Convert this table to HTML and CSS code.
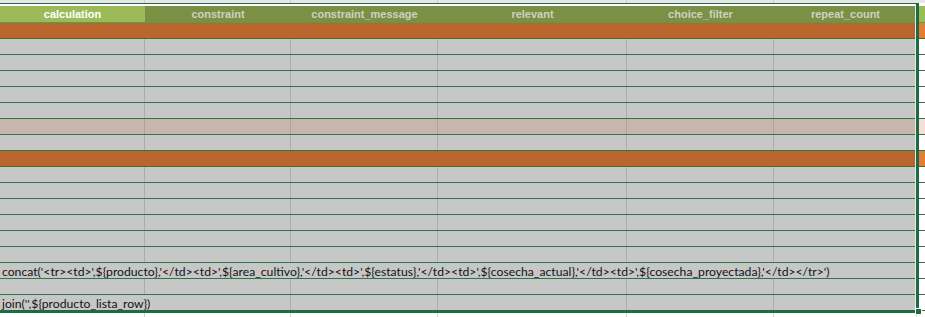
FILE: index.html
```html
<!DOCTYPE html>
<html lang="es">
<head>
<meta charset="utf-8">
<title>Hoja</title>
<link rel="stylesheet" href="styles.css">
</head>
<body>
<div class="sheet">
  <div class="row strip"><div class="c"></div><div class="c"></div><div class="c"></div><div class="c"></div><div class="c"></div><div class="c"></div><div class="edge"></div><div class="out"></div></div>

  <div class="row hdr">
    <div class="c active">calculation</div>
    <div class="c">constraint</div>
    <div class="c">constraint_message</div>
    <div class="c">relevant</div>
    <div class="c">choice_filter</div>
    <div class="c">repeat_count</div>
    <div class="edge"></div><div class="out"></div>
  </div>

  <div class="row orange"><div class="c"></div><div class="c"></div><div class="c"></div><div class="c"></div><div class="c"></div><div class="c"></div><div class="edge"></div><div class="out"></div></div>
  <div class="row gray"><div class="c"></div><div class="c"></div><div class="c"></div><div class="c"></div><div class="c"></div><div class="c"></div><div class="edge"></div><div class="out"></div></div>
  <div class="row gray"><div class="c"></div><div class="c"></div><div class="c"></div><div class="c"></div><div class="c"></div><div class="c"></div><div class="edge"></div><div class="out"></div></div>
  <div class="row gray"><div class="c"></div><div class="c"></div><div class="c"></div><div class="c"></div><div class="c"></div><div class="c"></div><div class="edge"></div><div class="out"></div></div>
  <div class="row gray"><div class="c"></div><div class="c"></div><div class="c"></div><div class="c"></div><div class="c"></div><div class="c"></div><div class="edge"></div><div class="out"></div></div>
  <div class="row gray"><div class="c"></div><div class="c"></div><div class="c"></div><div class="c"></div><div class="c"></div><div class="c"></div><div class="edge"></div><div class="out"></div></div>
  <div class="row pink"><div class="c"></div><div class="c"></div><div class="c"></div><div class="c"></div><div class="c"></div><div class="c"></div><div class="edge"></div><div class="out"></div></div>
  <div class="row gray"><div class="c"></div><div class="c"></div><div class="c"></div><div class="c"></div><div class="c"></div><div class="c"></div><div class="edge"></div><div class="out"></div></div>
  <div class="row orange"><div class="c"></div><div class="c"></div><div class="c"></div><div class="c"></div><div class="c"></div><div class="c"></div><div class="edge"></div><div class="out"></div></div>
  <div class="row gray"><div class="c"></div><div class="c"></div><div class="c"></div><div class="c"></div><div class="c"></div><div class="c"></div><div class="edge"></div><div class="out"></div></div>
  <div class="row gray"><div class="c"></div><div class="c"></div><div class="c"></div><div class="c"></div><div class="c"></div><div class="c"></div><div class="edge"></div><div class="out"></div></div>
  <div class="row gray"><div class="c"></div><div class="c"></div><div class="c"></div><div class="c"></div><div class="c"></div><div class="c"></div><div class="edge"></div><div class="out"></div></div>
  <div class="row gray"><div class="c"></div><div class="c"></div><div class="c"></div><div class="c"></div><div class="c"></div><div class="c"></div><div class="edge"></div><div class="out"></div></div>
  <div class="row gray"><div class="c"></div><div class="c"></div><div class="c"></div><div class="c"></div><div class="c"></div><div class="c"></div><div class="edge"></div><div class="out"></div></div>
  <div class="row gray"><div class="c"></div><div class="c"></div><div class="c"></div><div class="c"></div><div class="c"></div><div class="c"></div><div class="edge"></div><div class="out"></div></div>
  <div class="row gray">
    <div class="c text span6">concat('&lt;tr&gt;&lt;td&gt;',${producto},'&lt;/td&gt;&lt;td&gt;',${area_cultivo},'&lt;/td&gt;&lt;td&gt;',${estatus},'&lt;/td&gt;&lt;td&gt;',${cosecha_actual},'&lt;/td&gt;&lt;td&gt;',${cosecha_proyectada},'&lt;/td&gt;&lt;/tr&gt;')</div>
    <div class="edge"></div><div class="out"></div>
  </div>
  <div class="row gray"><div class="c"></div><div class="c"></div><div class="c"></div><div class="c"></div><div class="c"></div><div class="c"></div><div class="edge"></div><div class="out"></div></div>
  <div class="row gray">
    <div class="c text span2">join('',${producto_lista_row})</div>
    <div class="c"></div><div class="c"></div><div class="c"></div><div class="c"></div>
    <div class="edge"></div><div class="out"></div>
  </div>
  <div class="row below"><div class="c"></div><div class="c"></div><div class="c"></div><div class="c"></div><div class="c"></div><div class="c"></div><div class="edge"></div><div class="out"></div></div>

  <div class="selection"></div>
  <div class="handle"></div>
</div>
</body>
</html>
```

FILE: styles.css
```css
html, body {
  margin: 0;
  padding: 0;
  background: #ffffff;
  overflow: hidden;
}

.sheet {
  position: relative;
  width: 925px;
  height: 317px;
  overflow: hidden;
}

.row {
  display: grid;
  grid-template-columns: 145px 146px 147px 189px 147px 143px 3px 5px;
  box-sizing: border-box;
  height: 16px;
  border-bottom: 1px solid #257a4b;
}

.c {
  box-sizing: border-box;
  min-width: 0;
}

/* top partial row */
.strip {
  height: 3px;
  border-bottom: 0;
}
.strip .c {
  background: #e6e6e6;
  border-right: 1px solid #cdcdcd;
}
.strip .c:nth-child(6) { border-right: 0; }
.strip .edge, .strip .out { background: #e6e6e6; }

/* header row */
.hdr {
  height: 20px;
  border-top: 3px solid #ffffff;
  border-bottom: 1px solid #45a64c;
}
.hdr .c {
  background: #7a9145;
  color: #cdd2c0;
  font-family: "Liberation Sans", Arial, sans-serif;
  font-weight: bold;
  font-size: 11px;
  line-height: 16px;
  text-align: center;
  white-space: nowrap;
  overflow: hidden;
}
.hdr .c.active {
  background: #9bbb59;
  color: #ffffff;
}
.hdr .edge, .hdr .out { background: #9bbb59; }

/* orange rows */
.orange { border-bottom-color: #4c6a33; }
.orange .c { background: #b9652b; }
.orange .edge, .orange .out { background: #e67d35; }

/* gray rows */
.gray .c {
  background: #c7c7c7;
  border-right: 1px solid #acacac;
}
.gray .c:nth-child(6) { border-right: 0; }
.gray .edge, .gray .out { background: #ffffff; }

/* pinkish row */
.pink .c {
  background: #c6b6ad;
  border-right: 1px solid #aea29b;
}
.pink .c:nth-child(6) { border-right: 0; }
.pink .edge, .pink .out { background: #f4e0d6; }

/* text cells */
.gray .c.text {
  font-family: Lato, "Open Sans", sans-serif;
  font-size: 12.2px;
  color: #141414;
  white-space: nowrap;
  overflow: visible;
  padding-left: 2px;
  line-height: 13px;
  display: flex;
  align-items: flex-end;
}
.gray .c.span6 {
  grid-column: span 6;
  border-right: 0;
}
.gray .c.span2 {
  grid-column: span 2;
}

/* rows below the selection */
.below {
  height: 6px;
  border-bottom: 0;
}
.below .c {
  background: #ffffff;
  border-right: 1px solid #d4d4d4;
}
.below .edge, .below .out { background: #ffffff; }

/* selection overlay */
.selection {
  position: absolute;
  left: 0;
  top: 3px;
  width: 916px;
  height: 306px;
  border-top: 1px solid #1f6b42;
  border-right: 3px solid #1f6b42;
  border-bottom: 3px solid #1f6b42;
  box-shadow: inset -1px 0 0 #e9e9e9;
  pointer-events: none;
}

.handle {
  position: absolute;
  left: 915px;
  top: 308px;
  width: 5px;
  height: 5px;
  background: #1f6b42;
  border: 1px solid #ffffff;
}
```
